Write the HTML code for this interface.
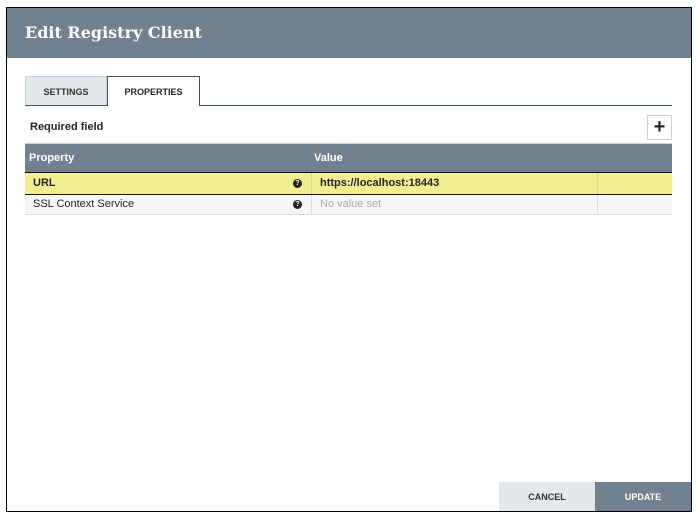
<!DOCTYPE html>
<html><head><style>
body{margin:0;width:700px;height:516px;background:#fff;position:relative;font-family:"Liberation Sans",sans-serif;overflow:hidden}
.a{position:absolute}
.frame{left:6px;top:7px;width:684px;height:503px;border:1px solid #000}
.hdr{left:7px;top:8px;width:684px;height:50px;background:#728190;color:#fff;font-family:"DejaVu Serif","Liberation Serif",serif;font-weight:bold;font-size:16px;line-height:50px;padding-left:18px;box-sizing:border-box}
.tab{top:76px;height:29px;font-size:9px;font-weight:bold;color:#333;text-align:center;line-height:30px;box-sizing:border-box}
.q{width:9px;height:9px;border-radius:50%;background:#222;color:#fff;font-size:7px;font-weight:bold;text-align:center;line-height:9px}
.btn{top:482px;height:29px;font-size:9px;font-weight:bold;text-align:center;line-height:30px}
</style></head><body>
<div class="a frame"></div>
<div class="a hdr">Edit Registry Client</div>
<div class="a" style="left:25px;top:105px;width:647px;height:1px;background:#415462"></div>
<div class="a tab" style="left:25px;width:82px;background:#e3e8eb;border:1px solid #ccd3d8;border-bottom:none">SETTINGS</div>
<div class="a tab" style="left:107px;width:93px;height:30px;background:#fff;border:1px solid #415462;border-bottom:none;color:#262626">PROPERTIES</div>
<div class="a" style="left:30px;top:121px;font-size:11px;font-weight:bold;color:#262626">Required field</div>
<div class="a" style="left:647px;top:115px;width:23px;height:23px;border:1px solid #ccd3d8;background:#fff;text-align:center;line-height:23px;font-size:20px;font-weight:bold;color:#1a2a30">+</div>
<div class="a" style="left:25px;top:143px;width:647px;height:29px;background:#728190;border-top:1px solid #ccd3d8;color:#fff;font-size:11px;font-weight:bold;line-height:29px">
<span class="a" style="left:4px">Property</span><span class="a" style="left:289px">Value</span></div>
<div class="a" style="left:25px;top:172px;width:647px;height:21px;background:#f4ee90;border-top:1px solid #111;border-bottom:1px solid #111;font-size:11px;font-weight:bold;color:#262626;line-height:21px">
<span class="a" style="left:8px">URL</span><span class="a" style="left:295px">https://localhost:18443</span>
<div class="a q" style="left:268px;top:6px">?</div>
<div class="a" style="left:286px;top:0;width:1px;height:21px;background:#d8d4a0"></div>
<div class="a" style="left:572px;top:0;width:1px;height:21px;background:#d8d4a0"></div></div>
<div class="a" style="left:25px;top:195px;width:647px;height:19px;background:#f4f6f7;border-bottom:1px solid #d8dde0;font-size:11px;color:#262626;line-height:19px">
<span class="a" style="left:8px">SSL Context Service</span><span class="a" style="left:295px;color:#aaa">No value set</span>
<div class="a q" style="left:268px;top:5px">?</div>
<div class="a" style="left:286px;top:0;width:1px;height:19px;background:#d8dde0"></div>
<div class="a" style="left:572px;top:0;width:1px;height:19px;background:#d8dde0"></div></div>
<div class="a btn" style="left:499px;width:96px;background:#e3e8eb;color:#333">CANCEL</div>
<div class="a btn" style="left:595px;width:96px;background:#728190;color:#fff">UPDATE</div>
</body></html>
